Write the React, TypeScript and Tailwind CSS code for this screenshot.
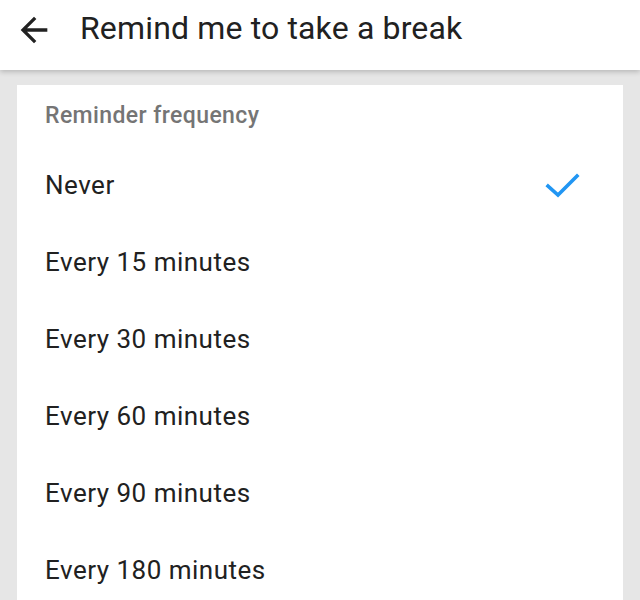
import React from "react";

const options = [
  "Never",
  "Every 15 minutes",
  "Every 30 minutes",
  "Every 60 minutes",
  "Every 90 minutes",
  "Every 180 minutes",
];

function BackArrow() {
  return (
    <svg width="40" height="40" viewBox="0 0 24 24" fill="#212121">
      <path d="M20 11H7.83l5.59-5.59L12 4l-8 8 8 8 1.41-1.41L7.83 13H20v-2z" />
    </svg>
  );
}

function Check() {
  return (
    <svg width="36" height="28" viewBox="0 0 36 28" fill="none">
      <polyline
        points="4,14 14,23 33,4"
        stroke="#2196f3"
        strokeWidth="3.6"
        strokeLinecap="square"
      />
    </svg>
  );
}

export default function App() {
  const selected = "Never";

  return (
    <div
      className="flex h-[600px] w-[640px] flex-col overflow-hidden bg-[#e6e6e6]"
      style={{ fontFamily: "Roboto, 'Noto Sans', sans-serif" }}
    >
      {/* Toolbar */}

      <div className="relative z-10 flex h-[70px] shrink-0 items-center bg-white shadow-[0_2px_5px_rgba(0,0,0,0.2)]">
        <div className="ml-[14px] mt-[-10px]">
          <BackArrow />
        </div>
        <h1 className="ml-[26px] mt-[-14px] text-[32px] leading-none tracking-[0.15px] text-[#212121]">
          Remind me to take a break
        </h1>
      </div>

      {/* Frequency card */}

      <div className="mx-[17px] mt-[15px] flex-1 bg-white pt-[16px]">
        <p className="pl-[28px] text-[23px] font-medium leading-[30px] tracking-[0.4px] text-[#757575]">
          Reminder frequency
        </p>

        <div className="mt-[16px]">
          {options.map((option) => (
            <div
              key={option}
              className="flex h-[77px] items-center justify-between pl-[28px] pr-[43px]"
            >
              <span className="text-[26px] tracking-[0.5px] text-[#212121]">{option}</span>
              {option === selected && <Check />}
            </div>
          ))}
        </div>
      </div>
    </div>
  );
}
